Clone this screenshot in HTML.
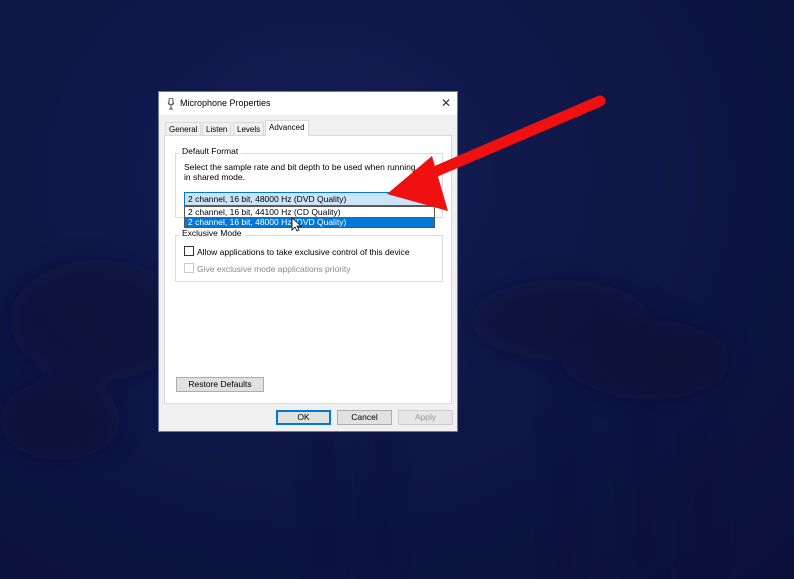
<!DOCTYPE html>
<html><head><meta charset="utf-8"><style>
*{margin:0;padding:0;box-sizing:border-box}
body{width:794px;height:579px;overflow:hidden;position:relative;font-family:"Liberation Sans",sans-serif;font-size:8.5px;color:#000;
background:radial-gradient(ellipse at 40% 30%,#141d55 0%,#0e1645 50%,#0a1038 100%);}
.a{position:absolute}
.dlg{left:158px;top:91px;width:300px;height:341px;background:#f0f0f0;border:1px solid #6a7a9a}
.title{left:0;top:0;width:298px;height:23px;background:#fff}
.panel{left:5px;top:43px;width:288px;height:269px;background:#fff;border:1px solid #d9d9d9}
.tab{top:30px;height:13px;font-size:8px;padding:2px 3px;border:1px solid #d9d9d9;border-bottom:none;background:#f0f0f0}
.grp{border:1px solid #dcdcdc}
.btn{height:15px;background:#e1e1e1;border:1px solid #adadad;text-align:center;font-size:8.5px;line-height:13px}
</style></head><body>
<svg class="a" style="left:0;top:0" width="794" height="579">
<defs><filter id="b"><feGaussianBlur stdDeviation="12"/></filter></defs>
<g fill="#070c2a" opacity=".35" filter="url(#b)">
<rect x="320" y="420" width="6" height="159"/><rect x="380" y="400" width="5" height="179"/><rect x="560" y="330" width="7" height="249"/><rect x="640" y="380" width="6" height="199"/><rect x="700" y="420" width="6" height="159"/>
<ellipse cx="560" cy="320" rx="90" ry="40"/><ellipse cx="650" cy="360" rx="80" ry="40"/><ellipse cx="100" cy="320" rx="90" ry="60"/><ellipse cx="60" cy="420" rx="60" ry="40"/>
</g>
</svg>
<div class="a dlg">
<div class="a title"></div>
<svg class="a" style="left:8px;top:6px" width="8" height="12"><rect x="2" y="0" width="4" height="7" rx="2" fill="none" stroke="#444"/><path d="M1 5q3 4 6 0M4 8v3M2 11h4" stroke="#444" fill="none"/></svg>
<div class="a" style="left:21px;top:6px;font-size:9px">Microphone Properties</div>
<div class="a" style="left:282px;top:4px;font-size:12px;color:#333">✕</div>
<div class="a tab" style="left:6px">General</div>
<div class="a tab" style="left:43px">Listen</div>
<div class="a tab" style="left:74px">Levels</div>
<div class="a tab" style="left:106px;top:28px;height:16px;background:#fff;z-index:2">Advanced</div>
<div class="a panel"></div>
<div class="a grp" style="left:16px;top:61px;width:268px;height:65px"></div>
<div class="a" style="left:20px;top:54px;background:#fff;padding:0 3px">Default Format</div>
<div class="a" style="left:25px;top:70px;line-height:10px">Select the sample rate and bit depth to be used when running<br>in shared mode.</div>
<div class="a" style="left:25px;top:100px;width:251px;height:14px;background:#cce4f7;border:1px solid #0078d7;padding:1px 3px">2 channel, 16 bit, 48000 Hz (DVD Quality)<span style="position:absolute;right:4px;top:0">⌄</span></div>
<div class="a" style="left:25px;top:114px;width:251px;height:22px;background:#fff;border:1px solid #555">
<div style="padding:0 3px;height:10px;line-height:10px">2 channel, 16 bit, 44100 Hz (CD Quality)</div>
<div style="padding:0 3px;height:10px;line-height:10px;background:#0078d7;color:#fff">2 channel, 16 bit, 48000 Hz (DVD Quality)</div></div>
<div class="a grp" style="left:16px;top:143px;width:268px;height:47px"></div>
<div class="a" style="left:20px;top:136px;background:#fff;padding:0 3px">Exclusive Mode</div>
<div class="a" style="left:25px;top:154px;width:10px;height:10px;border:1px solid #333;background:#fff"></div>
<div class="a" style="left:38px;top:155px">Allow applications to take exclusive control of this device</div>
<div class="a" style="left:25px;top:171px;width:10px;height:10px;border:1px solid #ccc"></div>
<div class="a" style="left:38px;top:172px;color:#888">Give exclusive mode applications priority</div>
<div class="a btn" style="left:17px;top:285px;width:88px">Restore Defaults</div>
<div class="a btn" style="left:117px;top:318px;width:55px;border:2px solid #0078d7;line-height:11px">OK</div>
<div class="a btn" style="left:178px;top:318px;width:55px">Cancel</div>
<div class="a btn" style="left:239px;top:318px;width:55px;color:#999;border-color:#ccc;background:#e6e6e6">Apply</div>
</div>
<svg class="a" style="left:0;top:0" width="794" height="579">
<line x1="600" y1="101" x2="425" y2="176" stroke="#f01010" stroke-width="11" stroke-linecap="round"/>
<polygon points="387,194 432,156 448,211" fill="#f01010"/>
<path d="M292 218v12l3-3 2 4 2-1-2-4h4z" fill="#fff" stroke="#000" stroke-width=".8"/>
</svg>
</body></html>
